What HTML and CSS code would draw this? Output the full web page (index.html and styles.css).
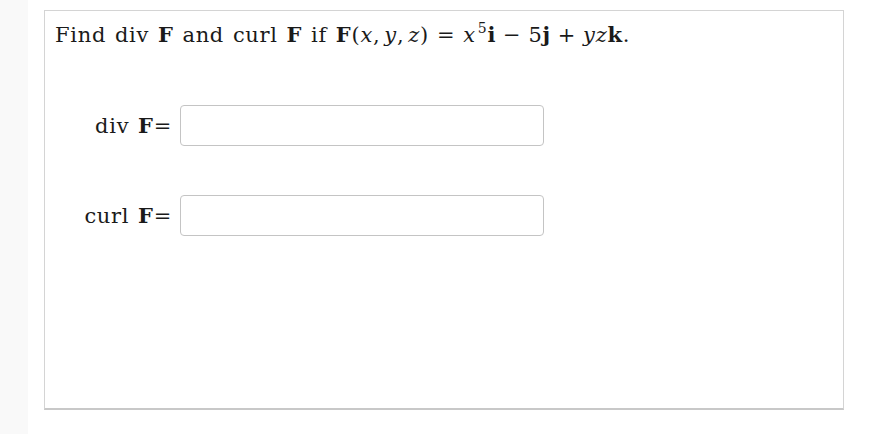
FILE: index.html
```html
<!DOCTYPE html>
<html>
<head>
<meta charset="utf-8">
<link rel="stylesheet" href="styles.css">
</head>
<body>
<div class="page">
  <div class="strip"></div>
  <div class="panel">
    <p class="question">Find div <b>F</b> and curl <b>F</b> if <span class="math"><b>F</b>(<i>x</i>,<span class="thin"></span><i>y</i>,<span class="thin"></span><i>z</i>)<span class="rel">=</span><i>x</i><sup>5</sup><b>i</b><span class="bin">−</span>5<b>j</b><span class="bin">+</span><i>yz</i><b>k</b>.</span></p>
    <div class="answers">
      <label class="label">div <b>F</b>=</label>
      <input class="field" type="text">
      <label class="label">curl <b>F</b>=</label>
      <input class="field" type="text">
    </div>
  </div>
</div>
</body>
</html>
```

FILE: styles.css
```css
html, body {
  margin: 0;
  padding: 0;
  background: #ffffff;
}
.page {
  display: flex;
  align-items: flex-start;
  height: 434px;
}
.strip {
  width: 28px;
  height: 434px;
  background: #f9f9f9;
  flex: none;
}
.panel {
  margin-left: 16px;
  margin-top: 10px;
  width: 798px;
  height: 397px;
  border: 1px solid #d4d4d4;
  border-bottom: 2px solid #c8c8c8;
  background: #fff;
  font-family: "DejaVu Serif", "Liberation Serif", serif;
  color: #1a1a1a;
}
.question {
  margin: 0;
  padding: 11px 0 0 10px;
  font-size: 21px;
  line-height: 26px;
  letter-spacing: 0.7px;
  word-spacing: 1.5px;
}
.math {
  white-space: nowrap;
}
.question i {
  font-style: italic;
}
.question sup {
  font-size: 14px;
  line-height: 0;
  margin-left: 2px;
  vertical-align: 9px;
}
.thin {
  display: inline-block;
  width: 4px;
}
.rel {
  margin: 0 8px;
}
.bin {
  margin: 0 7px;
}
.answers {
  display: grid;
  grid-template-columns: 127px 364px;
  column-gap: 8px;
  row-gap: 49px;
  align-items: center;
  margin-top: 57px;
}
.label {
  justify-self: end;
  font-size: 21px;
  letter-spacing: 0.7px;
  word-spacing: 1.5px;
}
.field {
  box-sizing: border-box;
  width: 364px;
  height: 41px;
  margin: 0;
  border: 1px solid #c4c4c4;
  border-radius: 4px;
  background: #fff;
}
```
